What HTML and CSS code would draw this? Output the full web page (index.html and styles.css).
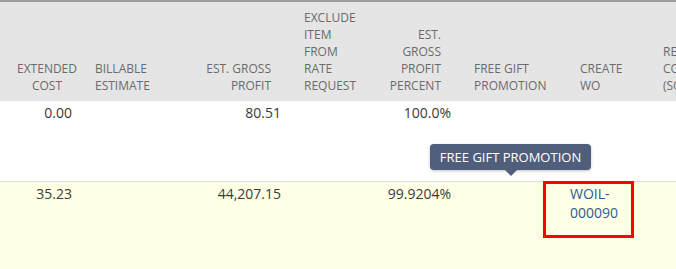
FILE: index.html
```html
<!DOCTYPE html>
<html lang="en">
<head>
    <meta charset="UTF-8">
    <meta name="viewport" content="width=device-width, initial-scale=1.0">
    <title>Item Lines</title>
    <link rel="stylesheet" href="styles.css">
</head>
<body>

<div class="grid-wrap">
    <table class="item-grid">
        <colgroup>
            <col class="c-ext-cost">
            <col class="c-billable">
            <col class="c-gross">
            <col class="c-exclude">
            <col class="c-percent">
            <col class="c-gift">
            <col class="c-wo">
            <col class="c-related">
        </colgroup>
        <thead>
        <tr>
            <th class="num">Extended<br>Cost</th>
            <th>Billable<br>Estimate</th>
            <th class="num">Est. Gross<br>Profit</th>
            <th>Exclude<br>Item<br>From<br>Rate<br>Request</th>
            <th class="num">Est.<br>Gross<br>Profit<br>Percent</th>
            <th>Free Gift<br>Promotion</th>
            <th>Create<br>WO</th>
            <th>Related<br>Contract<br>(SO)</th>
        </tr>
        </thead>
        <tbody>
        <tr class="row-first">
            <td class="num">0.00</td>
            <td></td>
            <td class="num">80.51</td>
            <td></td>
            <td class="num">100.0%</td>
            <td></td>
            <td></td>
            <td></td>
        </tr>
        <tr class="row-current">
            <td class="num">35.23</td>
            <td></td>
            <td class="num">44,207.15</td>
            <td></td>
            <td class="num">99.9204%</td>
            <td></td>
            <td><a href="#" class="wo-link">WOIL-<br>000090</a></td>
            <td></td>
        </tr>
        </tbody>
    </table>

    <!-- подсказка к колонке подарка -->
    <div class="tip">FREE GIFT PROMOTION</div>
    <!-- выделение ссылки на заказ -->
    <div class="mark"></div>
</div>

</body>
</html>
```

FILE: styles.css
```css
html, body {
    margin: 0;
    padding: 0;
    overflow: hidden;
    background: #fff;
}
body {
    font-family: "Open Sans", "DejaVu Sans", sans-serif;
    color: #3a3a3a;
}
.grid-wrap {
    position: relative;
    width: 676px;
    height: 269px;
    overflow: hidden;
}
.item-grid {
    border-collapse: collapse;
    table-layout: fixed;
    width: 752px;
    border-top: 2px solid #9e9e9e;
}
.c-ext-cost { width: 78px; }
.c-billable { width: 111px; }
.c-gross { width: 98px; }
.c-exclude { width: 85px; }
.c-percent { width: 85px; }
.c-gift { width: 106px; }
.c-wo { width: 83px; }
.c-related { width: 106px; }

.item-grid th {
    background-color: #e5e5e5;
    color: #6b6b6b;
    font-size: 12px;
    font-weight: normal;
    line-height: 17px;
    text-transform: uppercase;
    text-align: left;
    vertical-align: bottom;
    white-space: nowrap;
    padding: 0 16px 7px 17px;
    height: 92px;
}
.item-grid th.num {
    text-align: right;
}
.item-grid td {
    font-size: 14px;
    line-height: 19px;
    vertical-align: top;
    padding: 2px 6px 0 7px;
    white-space: nowrap;
}
.item-grid td.num {
    text-align: right;
}
.row-first td {
    height: 78px;
    background: #fff;
    border-bottom: 1px solid #dedede;
}
.row-current td {
    height: 90px;
    background: #ffffe5;
}
.wo-link {
    color: #2d5b9a;
    text-decoration: none;
}

.tip {
    position: absolute;
    left: 430px;
    top: 144px;
    width: 161px;
    height: 26px;
    box-sizing: border-box;
    background: #4e5e7b;
    color: #fff;
    font-size: 13px;
    line-height: 26px;
    text-align: center;
    border-radius: 4px;
    box-shadow: 0 1px 3px rgba(0, 0, 0, 0.25);
}
.tip:after {
    content: '';
    position: absolute;
    left: 75px;
    bottom: -6px;
    border-left: 6px solid transparent;
    border-right: 6px solid transparent;
    border-top: 6px solid #4e5e7b;
}
.mark {
    position: absolute;
    left: 543px;
    top: 181px;
    width: 91px;
    height: 57px;
    box-sizing: border-box;
    border: 3px solid #ff0000;
}
```
